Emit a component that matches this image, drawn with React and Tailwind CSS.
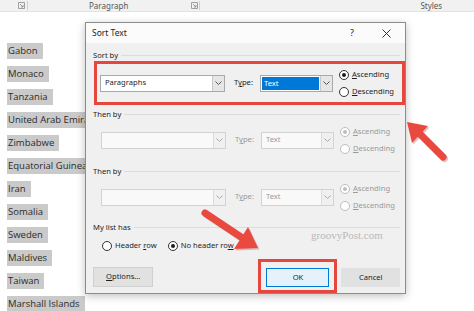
import React from 'react'

const countries = [
  'Gabon',
  'Monaco',
  'Tanzania',
  'United Arab Emirates',
  'Zimbabwe',
  'Equatorial Guinea',
  'Iran',
  'Somalia',
  'Sweden',
  'Maldives',
  'Taiwan',
  'Marshall Islands',
]

function Launcher() {
  return (
    <svg width="7" height="7" viewBox="0 0 7 7" className="text-[#8a8a8a]">
      <path d="M0.5 0.5 H6.5 V6.5 H0.5 Z" fill="none" stroke="currentColor" strokeWidth="0.8" />
      <path d="M2 2 L5 5 M5 3 V5 H3" fill="none" stroke="currentColor" strokeWidth="0.8" />
    </svg>
  )
}

function Chevron({ disabled }) {
  return (
    <svg width="7" height="4" viewBox="0 0 7 4">
      <path d="M0.5 0.5 L3.5 3.5 L6.5 0.5" fill="none" stroke={disabled ? '#a8a8a8' : '#555'} strokeWidth="1" />
    </svg>
  )
}

function Combo({ width, text, selected, disabled }) {
  return (
    <div
      className={`flex h-[17px] shrink-0 border ${disabled ? 'border-[#d2d2d2] bg-[#f9f9f9]' : 'border-[#a9a9a9] bg-white'}`}
      style={{ width }}
    >
      <div className="flex-1 flex items-center p-[1px]">
        {selected ? (
          <div className="h-full w-full bg-[#0078d7] text-white pl-[2px] leading-[13px]">{text}</div>
        ) : (
          <span className={`pl-[3px] ${disabled ? 'text-[#9a9a9a]' : 'text-[#1e1e1e]'}`}>{text}</span>
        )}
      </div>
      <div
        className={`w-[12px] flex items-center justify-center border-l ${disabled ? 'border-[#dcdcdc] bg-[#f0f0f0]' : 'border-[#c8c8c8] bg-[#e6e6e6]'}`}
      >
        <Chevron disabled={disabled} />
      </div>
    </div>
  )
}

function Radio({ checked, disabled, children }) {
  return (
    <div className="flex items-center gap-[3px] h-[17px]">
      <span
        className={`w-[10px] h-[10px] rounded-full border bg-white flex items-center justify-center ${disabled ? 'border-[#bdbdbd]' : 'border-[#333]'}`}
      >
        {checked && <span className={`w-[4px] h-[4px] rounded-full ${disabled ? 'bg-[#bdbdbd]' : 'bg-[#1e1e1e]'}`} />}
      </span>
      <span className={disabled ? 'text-[#9a9a9a]' : 'text-[#1e1e1e]'}>{children}</span>
    </div>
  )
}

function SortRow({ first, disabled }) {
  return (
    <div className="flex items-center h-full">
      <Combo width={125} text={first ? 'Paragraphs' : ''} disabled={disabled} />
      <span className={`ml-[9px] mr-[7px] ${disabled ? 'text-[#9a9a9a]' : 'text-[#1e1e1e]'}`}>
        T<u>y</u>pe:
      </span>
      <Combo width={73} text="Text" selected={first} disabled={disabled} />
      <div className="ml-[6px] flex flex-col">
        <Radio checked disabled={disabled}>
          <u>A</u>scending
        </Radio>
        <Radio disabled={disabled}>
          <u>D</u>escending
        </Radio>
      </div>
    </div>
  )
}

function GroupLabel({ children, className = '' }) {
  return (
    <div className={`flex items-center gap-[3px] h-[11px] text-[#1e1e1e] ${className}`}>
      <span className="leading-[11px]">{children}</span>
      <div className="flex-1 h-px bg-[#dcdcdc]" />
    </div>
  )
}

function Arrows() {
  return (
    <svg className="absolute inset-0 pointer-events-none" width="474" height="311" viewBox="0 0 474 311">
      <g opacity="0.25" transform="translate(1.5 1.5)" fill="#7a1a14" stroke="#7a1a14">
        <line x1="443" y1="157" x2="420" y2="134" strokeWidth="7" strokeLinecap="round" />
        <polygon points="407,122 428,126 412,143" stroke="none" />
        <line x1="205" y1="213" x2="241" y2="237" strokeWidth="7" strokeLinecap="round" />
        <polygon points="258,248 248,227 234,249" stroke="none" />
      </g>
      <g fill="#e9493f" stroke="#e9493f">
        <line x1="443" y1="157" x2="420" y2="134" strokeWidth="7" strokeLinecap="round" />
        <polygon points="407,122 428,126 412,143" stroke="none" />
        <line x1="205" y1="213" x2="241" y2="237" strokeWidth="7" strokeLinecap="round" />
        <polygon points="258,248 248,227 234,249" stroke="none" />
      </g>
    </svg>
  )
}

export default function App() {
  return (
    <div className="relative w-[474px] h-[311px] overflow-hidden bg-white font-['Noto_Sans',sans-serif]">
      {/* ribbon strip */}
      <div className="h-[12px] bg-[#f1f1f1] border-b border-[#e2e2e2] flex items-center text-[8px] text-[#555] leading-[10px]">
        <div className="ml-[18px] flex items-center">
          <Launcher />
        </div>
        <div className="ml-[2px] w-px h-[9px] bg-[#cfcfcf]" />
        <span className="ml-[61px]">Paragraph</span>
        <div className="ml-[63px] flex items-center">
          <Launcher />
        </div>
        <div className="ml-[1px] w-px h-[9px] bg-[#cfcfcf]" />
        <span className="ml-[220px]">Styles</span>
      </div>

      {/* document text, long lines run under the dialog */}
      <div className="mt-[31px] pl-[7px] flex flex-col items-start gap-[7px] font-['Open_Sans',sans-serif]">
        {countries.map((c) => (
          <div
            key={c}
            className="h-[16px] leading-[16px] bg-[#cacaca] pl-[1px] pr-[5px] text-[9.5px] font-medium text-[#2b2b2b] whitespace-nowrap"
          >
            {c}
          </div>
        ))}
      </div>

      {/* dialog */}
      <div className="absolute left-[85px] top-[22px] w-[321px] h-[272px] border border-[#8c8c8c] bg-[#f0f0f0] shadow-[0_2px_8px_rgba(0,0,0,0.25)] text-[7.6px] flex flex-col">
        <div className="h-[20px] bg-[#fbfbfb] flex items-center pl-[6px] text-[8.5px] text-[#1e1e1e]">
          <span className="flex-1">Sort Text</span>
          <span className="w-[12px] text-center mr-[24px] text-[9px]">?</span>
          <svg width="9" height="9" viewBox="0 0 9 9" className="mr-[14px]">
            <path d="M0.5 0.5 L8.5 8.5 M8.5 0.5 L0.5 8.5" stroke="#333" strokeWidth="1" />
          </svg>
        </div>

        <div className="flex flex-col pl-[7px] pr-[5px]">
          <GroupLabel className="mt-[7px]">Sort by</GroupLabel>
          <div className="h-[44px] -mr-[5px] ml-px border-[3px] border-[#e5473e] pl-[3px]">
            <SortRow first />
          </div>

          <GroupLabel className="mt-[4px]">Then by</GroupLabel>
          <div className="h-[40px] pl-[8px]">
            <SortRow disabled />
          </div>

          <GroupLabel className="mt-[6px]">Then by</GroupLabel>
          <div className="h-[40px] pl-[8px]">
            <SortRow disabled />
          </div>

          <GroupLabel className="mt-[5px]">My list has</GroupLabel>
          <div className="mt-[6px] h-[14px] flex items-center pl-[9px] gap-[11px]">
            <Radio>
              Header <u>r</u>ow
            </Radio>
            <Radio checked>
              No header ro<u>w</u>
            </Radio>
          </div>

          <div className="mt-[6px] flex items-start">
            <button className="mt-[8px] w-[62px] h-[20px] bg-[#e1e1e1] border border-[#d0d0d0] text-[#1e1e1e]">
              <u>O</u>ptions...
            </button>
            <div className="ml-[105px] border-[3px] border-[#e5473e] pt-[6px] pb-[3px] px-[5px]">
              <button className="w-[63px] h-[19px] bg-[#e5f1fb] border border-[#0078d7] text-[#1e1e1e]">OK</button>
            </div>
            <button className="mt-[9px] ml-[4px] w-[60px] h-[19px] bg-[#e1e1e1] border border-[#e1e1e1] text-[#1e1e1e]">
              Cancel
            </button>
          </div>
        </div>

        <span className="absolute left-[225px] top-[204px] text-[11px] text-[#b9b9b9] font-['Liberation_Serif',serif]">
          groovyPost.com
        </span>
      </div>

      <Arrows />
    </div>
  )
}
